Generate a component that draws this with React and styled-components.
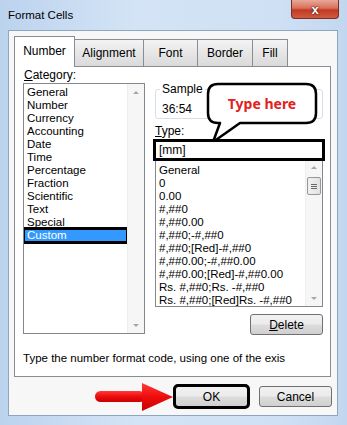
import styled, { createGlobalStyle } from 'styled-components'

const GlobalStyle = createGlobalStyle`
  body {
    margin: 0;
    font-family: 'Liberation Sans', Arial, sans-serif;
  }
`

const Window = styled.div`
  position: relative;
  width: 347px;
  height: 425px;
  overflow: hidden;
  display: flex;
  flex-direction: column;
  background: linear-gradient(90deg, #bcd3ee 0%, #d4e4f6 40%, #cfe0f4 80%, #c2d7ef 100%);
  font-size: 11px;
  color: #000;
`

const TitleBar = styled.div`
  height: 30px;
  flex-shrink: 0;
  display: flex;
  align-items: flex-start;
  padding: 0 8px;
`

const Title = styled.div`
  padding-top: 9px;
  font-size: 11.5px;
  color: #000;
`

const CloseButton = styled.div`
  margin-left: auto;
  width: 46px;
  height: 18px;
  border: 1px solid #7a2e24;
  border-top: none;
  border-radius: 0 0 4px 4px;
  background: linear-gradient(#e9a898 0%, #d9705c 45%, #c23a22 55%, #d05a42 100%);
  display: flex;
  align-items: center;
  justify-content: center;
  color: #fff;
  font-weight: bold;
  font-size: 13px;
  text-shadow: 0 0 2px #3b0d06, 0 0 1px #3b0d06;
`

const Client = styled.div`
  margin: 0 9px 0 8px;
  height: 386px;
  box-sizing: border-box;
  border: 1px solid #8fa6c0;
  background: #f7f7f7;
  padding: 6px 5px 0 5px;
  display: flex;
  flex-direction: column;
`

const Tabs = styled.div`
  display: flex;
  align-items: flex-end;
  height: 30px;
  margin-bottom: -1px;
  position: relative;
  z-index: 1;
`

const Tab = styled.div`
  box-sizing: border-box;
  width: ${p => p.$w}px;
  height: ${p => (p.$active ? 31 : 28)}px;
  margin-left: ${p => (p.$first ? 0 : -1)}px;
  border: 1px solid #898c95;
  border-bottom: ${p => (p.$active ? 'none' : '1px solid #898c95')};
  background: ${p => (p.$active ? '#fff' : 'linear-gradient(#f3f3f3, #e6e6e6 50%, #dadada)')};
  display: flex;
  align-items: center;
  justify-content: center;
  padding-bottom: ${p => (p.$active ? 3 : 0)}px;
  font-size: 12px;
  z-index: ${p => (p.$active ? 2 : 1)};
`

const Panel = styled.div`
  box-sizing: border-box;
  width: 317px;
  height: 311px;
  border: 1px solid #898c95;
  background: #fff;
  padding: 1px 0 0 8px;
  display: flex;
  flex-direction: column;
`

const Columns = styled.div`
  display: flex;
  height: 267px;
`

const LeftColumn = styled.div`
  width: 122px;
  display: flex;
  flex-direction: column;
`

const RightColumn = styled.div`
  width: 172px;
  margin-left: 8px;
  display: flex;
  flex-direction: column;
`

const Label = styled.div`
  line-height: 15px;
  height: 15px;
  font-size: 12px;
  margin-top: ${p => p.$top || 0}px;
  margin-left: ${p => p.$left || 0}px;
`

const ListBox = styled.div`
  box-sizing: border-box;
  width: ${p => p.$w}px;
  height: ${p => p.$h}px;
  margin-left: ${p => p.$left || 0}px;
  margin-top: ${p => p.$top || 0}px;
  border: 1px solid #828790;
  background: #fff;
  display: flex;
`

const Items = styled.div`
  flex: 1;
  padding-top: ${p => p.$top || 1}px;
  overflow: hidden;
`

const Item = styled.div`
  height: 13px;
  line-height: 13px;
  padding-left: 3px;
  white-space: nowrap;
  font-size: 11.5px;
  color: ${p => (p.$selected ? '#fff' : '#000')};
  background: ${p => (p.$selected ? '#3399ff' : 'transparent')};
  outline: ${p => (p.$selected ? '3px solid #000' : 'none')};
  outline-offset: -1px;
  position: relative;
`

const ScrollBar = styled.div`
  width: 16px;
  flex-shrink: 0;
  background: #f6f6f6;
  border-left: 1px solid #eeeeee;
  display: flex;
  flex-direction: column;
  align-items: center;
`

const ScrollArrow = styled.div`
  height: 16px;
  width: 16px;
  display: flex;
  align-items: center;
  justify-content: center;
  &::after {
    content: '';
    border-left: 3px solid transparent;
    border-right: 3px solid transparent;
    ${p => (p.$down ? 'border-top: 3px solid #a6a6a6;' : 'border-bottom: 3px solid #a6a6a6;')}
  }
`

const ScrollSpace = styled.div`
  flex: 1;
  width: 100%;
`

const Thumb = styled.div`
  box-sizing: border-box;
  width: 14px;
  height: 18px;
  margin-top: 2px;
  border: 1px solid #979797;
  border-radius: 2px;
  background: linear-gradient(90deg, #f1f1f1, #e2e2e2);
  display: flex;
  flex-direction: column;
  align-items: center;
  justify-content: center;
  gap: 1px;
`

const Grip = styled.div`
  width: 6px;
  height: 1px;
  background: #6a6a6a;
`

const GroupBox = styled.fieldset`
  box-sizing: border-box;
  margin: 15px 2px 0 2px;
  padding: 0 0 0 6px;
  height: 38px;
  border: 1px solid #d5dfe5;
  border-radius: 3px;
  min-width: 0;
`

const Legend = styled.legend`
  padding: 0 2px;
  margin-left: -2px;
  line-height: 13px;
  font-size: 12px;
`

const SampleValue = styled.div`
  line-height: 15px;
  padding-top: 6px;
  font-size: 12px;
`

const TypeInput = styled.div`
  box-sizing: border-box;
  width: 172px;
  height: 22px;
  border: 3px solid #000;
  padding-left: 3px;
  line-height: 16px;
  font-size: 12px;
  background: #fff;
  position: relative;
  z-index: 1;
`

const Button = styled.div`
  box-sizing: border-box;
  width: 73px;
  height: 21px;
  border: 1px solid #707070;
  border-radius: 3px;
  background: linear-gradient(#f2f2f2 0%, #ebebeb 48%, #dddddd 52%, #cfcfcf 100%);
  display: flex;
  align-items: center;
  justify-content: center;
  font-size: 12px;
  outline: ${p => (p.$marked ? '3px solid #000' : 'none')};
  outline-offset: -1px;
`

const DeleteRow = styled.div`
  display: flex;
  justify-content: flex-end;
  margin-top: 7px;
  padding-right: 2px;
`

const Hint = styled.div`
  margin-top: 16px;
  line-height: 15px;
  font-size: 11.5px;
  white-space: nowrap;
  overflow: hidden;
`

const Footer = styled.div`
  display: flex;
  justify-content: flex-end;
  gap: 11px;
  padding: 9px 0 0 0;
`

const Callout = styled.div`
  position: absolute;
  left: 205px;
  top: 80px;
  width: 116px;
  height: 66px;
`

const CalloutText = styled.div`
  position: absolute;
  left: 3px;
  top: 4px;
  width: 108px;
  height: 39px;
  display: flex;
  align-items: center;
  justify-content: center;
  color: #e3211d;
  font-family: 'Noto Sans', 'Open Sans', sans-serif;
  font-weight: bold;
  font-size: 14px;
  padding-bottom: 1px;
  box-sizing: border-box;
`

const Arrow = styled.svg`
  position: absolute;
  left: 93px;
  top: 381px;
`

const categories = [
  'General', 'Number', 'Currency', 'Accounting', 'Date', 'Time',
  'Percentage', 'Fraction', 'Scientific', 'Text', 'Special', 'Custom',
]

const formats = [
  'General', '0', '0.00', '#,##0', '#,##0.00', '#,##0;-#,##0',
  '#,##0;[Red]-#,##0', '#,##0.00;-#,##0.00', '#,##0.00;[Red]-#,##0.00',
  'Rs. #,##0;Rs. -#,##0', 'Rs. #,##0;[Red]Rs. -#,##0',
]

const tabs = [
  { name: 'Number', w: 61 },
  { name: 'Alignment', w: 70 },
  { name: 'Font', w: 55 },
  { name: 'Border', w: 56 },
  { name: 'Fill', w: 36 },
]

export default function App() {
  return (
    <>
      <GlobalStyle />
      <Window>
        <TitleBar>
          <Title>Format Cells</Title>
          <CloseButton>x</CloseButton>
        </TitleBar>
        <Client>
          <Tabs>
            {tabs.map((t, i) => (
              <Tab key={t.name} $w={t.w} $first={i === 0} $active={i === 0}>{t.name}</Tab>
            ))}
          </Tabs>
          <Panel>
            <Columns>
              <LeftColumn>
                <Label $left={1}><u>C</u>ategory:</Label>
                <ListBox $w={122} $h={251}>
                  <Items $top={2}>
                    {categories.map(c => (
                      <Item key={c} $selected={c === 'Custom'}>{c}</Item>
                    ))}
                  </Items>
                  <ScrollBar>
                    <ScrollArrow />
                    <ScrollSpace />
                    <ScrollArrow $down />
                  </ScrollBar>
                </ListBox>
              </LeftColumn>
              <RightColumn>
                <GroupBox>
                  <Legend>Sample</Legend>
                  <SampleValue>36:54</SampleValue>
                </GroupBox>
                <Label $top={5} $left={2}><u>T</u>ype:</Label>
                <TypeInput>[mm]</TypeInput>
                <ListBox $w={168} $h={149} $left={2} $top={-3}>
                  <Items $top={5}>
                    {formats.map(f => (
                      <Item key={f}>{f}</Item>
                    ))}
                  </Items>
                  <ScrollBar>
                    <ScrollArrow />
                    <Thumb><Grip /><Grip /><Grip /></Thumb>
                    <ScrollSpace />
                    <ScrollArrow $down />
                  </ScrollBar>
                </ListBox>
                <DeleteRow>
                  <Button><span><u>D</u>elete</span></Button>
                </DeleteRow>
              </RightColumn>
            </Columns>
            <Hint>Type the number format code, using one of the exis</Hint>
          </Panel>
          <Footer>
            <Button $marked>OK</Button>
            <Button>Cancel</Button>
          </Footer>
        </Client>

        <Callout>
          <svg width="116" height="66" viewBox="0 0 116 66">
            <path
              d="M13 4 H101 Q111 4 111 14 V33 Q111 43 101 43 H35 L8 62 L15 43 H13 Q3 43 3 33 V14 Q3 4 13 4 Z"
              fill="#fff"
              stroke="#000"
              strokeWidth="2.5"
              strokeLinejoin="round"
            />
          </svg>
          <CalloutText>Type here</CalloutText>
        </Callout>

        <Arrow width="82" height="32" viewBox="0 0 82 32">
          <defs>
            <linearGradient id="redArrow" x1="0" y1="0" x2="0" y2="1">
              <stop offset="0" stopColor="#ff3a3a" />
              <stop offset="0.5" stopColor="#ee0c0c" />
              <stop offset="1" stopColor="#c80000" />
            </linearGradient>
          </defs>
          <rect x="2" y="10" width="50" height="11" rx="5.5" fill="url(#redArrow)" />
          <polygon points="49,2 80,16 49,30" fill="url(#redArrow)" />
        </Arrow>
      </Window>
    </>
  )
}
